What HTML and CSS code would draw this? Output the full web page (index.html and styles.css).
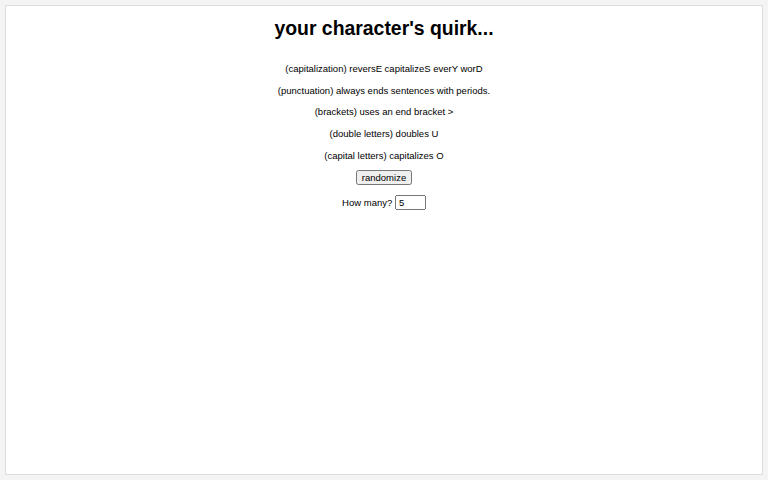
FILE: index.html
```html
<!DOCTYPE html>
<html lang="en">
<head>
    <meta charset="UTF-8">
    <title>Quirk Generator</title>
    <link rel="stylesheet" href="styles.css">
</head>
<body>

<div class="page">
    <h1 class="title">your character's quirk...</h1>
    <div id="quirks" class="quirks">
        <p>(capitalization) reversE capitalizeS everY worD</p>
        <p>(punctuation) always ends sentences with periods.</p>
        <p>(brackets) uses an end bracket &gt;</p>
        <p>(double letters) doubles U</p>
        <p>(capital letters) capitalizes O</p>
    </div>
    <button class="button" onclick="randomize()">randomize</button>
    <p class="count">How many? <input id="count" class="count-input" type="text" value="5"></p>
</div>

<script>
    const quirks = [
        '(capitalization) reversE capitalizeS everY worD',
        '(punctuation) always ends sentences with periods.',
        '(brackets) uses an end bracket >',
        '(double letters) doubles U',
        '(capital letters) capitalizes O',
        '(capitalization) all lowercase',
        '(punctuation) never uses commas',
        '(brackets) starts every line with <',
        '(double letters) doubles S',
        '(capital letters) capitalizes A'
    ];

    function randomize() {
        let n = parseInt(document.getElementById('count').value) || 1;
        let list = document.getElementById('quirks');
        list.innerHTML = '';
        for (let i = 0; i < n; i++) {
            let p = document.createElement('p');
            p.innerText = quirks[Math.floor(Math.random() * quirks.length)];
            list.appendChild(p);
        }
    }
</script>

</body>
</html>
```

FILE: styles.css
```css
body {
    font-family: "Liberation Sans", Arial, sans-serif;
    background-color: #f4f4f4;
    margin: 0;
    padding: 5px;
    height: 100vh;
    box-sizing: border-box;
}
.page {
    background-color: #fff;
    border: 1px solid #ddd;
    height: 100%;
    box-sizing: border-box;
    text-align: center;
    font-size: 9.5px;
    line-height: 11.7px;
    color: #000;
}
.title {
    font-size: 19.4px;
    line-height: 22px;
    margin: 11px 0 24px;
}
.quirks p {
    margin: 10px 0;
}
.quirks p:last-child {
    margin-bottom: 8px;
}
.button {
    font-family: "Liberation Sans", Arial, sans-serif;
    font-size: 9.5px;
    padding: 0 4px;
    margin-top: 0;
}
.count {
    margin: 10px 0;
}
.count-input {
    font-family: "Liberation Sans", Arial, sans-serif;
    font-size: 9.5px;
    width: 23px;
    padding: 0 2px;
}
```
